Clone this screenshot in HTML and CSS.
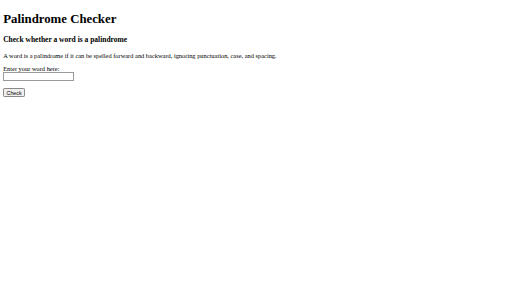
FILE: index.html
```html
<!DOCTYPE html>
<html lang="en">
<head>
<meta charset="utf-8">
<title>Palindrome Checker</title>
<link rel="stylesheet" href="styles.css">
</head>
<body>
<h1 class="title">Palindrome Checker</h1>
<h3 class="subtitle">Check whether a word is a palindrome</h3>
<p class="intro">A word is a palindrome if it can be spelled forward and backward, ignoring punctuation, case, and spacing.</p>
<form class="checker">
<label for="word" class="word-label">Enter your word here:</label>
<input type="text" id="word" class="word-input">
<button type="button" class="check-btn">Check</button>
</form>
</body>
</html>
```
FILE: styles.css
```css
html {
  background: #fff;
}
body {
  margin: 3.2px;
  font-family: "Liberation Serif", serif;
  font-size: 6.4px;
  color: #000;
}
.title {
  font-size: 12.8px;
  font-weight: bold;
  margin: 8.6px 0;
}
.subtitle {
  font-size: 7.5px;
  font-weight: bold;
  margin: 7.5px 0;
}
.intro {
  margin: 6.4px 0;
}
.checker {
  display: flex;
  flex-direction: column;
  align-items: flex-start;
}
.word-input {
  box-sizing: border-box;
  width: 71px;
  height: 8.6px;
  margin: 0;
  padding: 0.4px 0.8px;
  border: 0.8px solid #9a9a9a;
  border-radius: 0;
  font-family: "Liberation Sans", sans-serif;
  font-size: 5.3px;
  background: #fff;
}
.check-btn {
  margin-top: 7.6px;
  padding: 0.4px 2.4px;
  border: 0.8px solid #8a8a8a;
  border-radius: 1.2px;
  background: #efefef;
  font-family: "Liberation Sans", sans-serif;
  font-size: 5.3px;
  color: #000;
}
```
